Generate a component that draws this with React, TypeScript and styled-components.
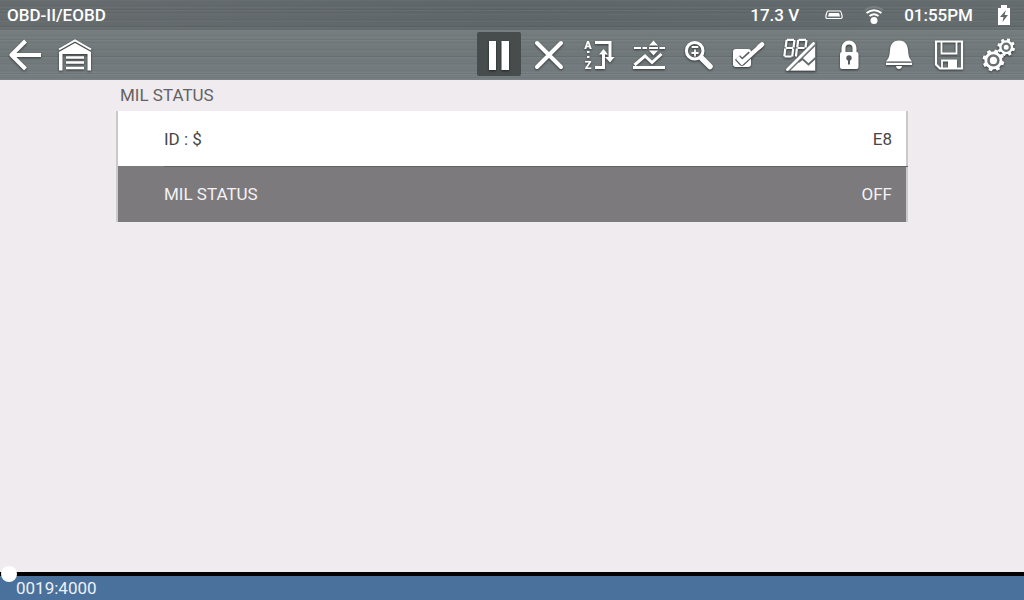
import React, { useState } from "react";
import styled, { createGlobalStyle } from "styled-components";

const GlobalStyle = createGlobalStyle`
  * { box-sizing: border-box; }
  body {
    margin: 0;
    background: #efebee;
    font-family: Roboto, "Liberation Sans", sans-serif;
    font-size: 17px;
    line-height: 20px;
  }
`;

const Screen = styled.div`
  display: flex;
  flex-direction: column;
  min-height: 100vh;
`;

const brushed = `
  repeating-linear-gradient(180deg, rgba(255,255,255,0.03) 0 1px, transparent 1px 5px, rgba(0,0,0,0.03) 5px 6px, transparent 6px 7px),
  repeating-linear-gradient(180deg, transparent 0 9px, rgba(0,0,0,0.05) 9px 10px, rgba(255,255,255,0.04) 10px 11px, transparent 11px 17px)`;

const StatusBar = styled.header`
  display: flex;
  align-items: center;
  height: 30px;
  padding: 0 14px 0 7px;
  color: #fff;
  font-weight: 500;
  background: ${brushed}, linear-gradient(90deg, #666c6e, #5f6669 50%, #656c6e);
`;

const Title = styled.h1`
  margin: 0;
  flex: 1;
  font-size: 17px;
  font-weight: 500;
`;

const StatusItems = styled.div`
  display: flex;
  align-items: center;
`;

const StatusIcon = styled.svg<{ $gap: number }>`
  display: block;
  margin-left: ${(p) => p.$gap}px;
`;

const Clock = styled.time`
  margin-left: 20px;
`;

const Toolbar = styled.nav`
  display: flex;
  align-items: center;
  gap: 6px;
  height: 50px;
  padding: 0 3px 2px;
  background: ${brushed}, linear-gradient(180deg, #767d7f, #6f7779 50%, #777e82);
`;

const Spacer = styled.div`
  flex: 1;
`;

const ToolButton = styled.button<{ $active?: boolean }>`
  width: 44px;
  height: 44px;
  padding: 0;
  border: 0;
  border-radius: 2px;
  color: #fff;
  background: ${(p) => (p.$active ? "#474c4c" : "transparent")};
  cursor: pointer;
`;

const Glyph = styled.svg`
  display: block;
  filter: drop-shadow(0 1px 1px rgba(0, 0, 0, 0.55));
`;

const Content = styled.main`
  flex: 1;
  width: 100%;
  max-width: 792px;
  margin: 0 auto;
`;

const Heading = styled.h2`
  margin: 0;
  padding: 5px 4px 6px;
  color: #646264;
  font-size: 17px;
  font-weight: 400;
`;

const Readings = styled.dl`
  margin: 0;
  border: solid #cbcacb;
  border-width: 0 2px;
`;

const Reading = styled.div<{ $selected?: boolean }>`
  position: relative;
  display: flex;
  align-items: center;
  justify-content: space-between;
  height: ${(p) => (p.$selected ? 56 : 55)}px;
  padding: 0 14px 0 46px;
  color: ${(p) => (p.$selected ? "#f4f2f4" : "#464646")};
  background: ${(p) => (p.$selected ? "#7d7a7d" : "#fff")};

  &:not(:first-child)::before {
    content: "";
    position: absolute;
    top: 0;
    left: 46px;
    right: -2px;
    height: 1px;
    background: #626262;
  }
`;

const Name = styled.dt``;

const Value = styled.dd`
  margin: 0;
`;

const Footer = styled.footer`
  height: 28px;
  background: #4a709c;
  color: #edf1f6;
`;

const Timeline = styled.input`
  appearance: none;
  display: block;
  position: relative;
  width: 100%;
  height: 4px;
  margin: 0;
  padding: 0 1px;
  background: #000;
  outline: none;

  &::-webkit-slider-thumb {
    appearance: none;
    width: 16px;
    height: 16px;
    border-radius: 50%;
    background: #fff;
  }
`;

const FrameCount = styled.output`
  display: block;
  padding: 2px 16px;
  font-size: 17px;
`;

type Point = [number, number];

function gearPath(cx: number, cy: number, outer: number, inner: number, teeth: number) {
  const step = (Math.PI * 2) / teeth;
  const points: Point[] = [];
  for (let i = 0; i < teeth; i++) {
    const a = i * step + 0.3;
    const corners: Point[] = [[-0.3, inner], [-0.2, outer], [0.2, outer], [0.3, inner]];
    corners.forEach(([t, r]) =>
      points.push([cx + r * Math.cos(a + t * step), cy + r * Math.sin(a + t * step)])
    );
  }
  return "M" + points.map(([x, y]) => `${x.toFixed(1)} ${y.toFixed(1)}`).join("L") + "Z";
}

const icons = {
  back: (
    <path d="M22.500 9L8.500 23L22.500 37M8.500 23H38" fill="none" stroke="currentColor" strokeWidth="4" strokeLinejoin="round" />
  ),
  home: (
    <>
      <path d="M6 17.500L22 8.500L38 17.500" fill="none" stroke="currentColor" strokeWidth="2" />
      <path d="M6 20L22 11L38 20V38.500H34.500V22H9.500V38.500H6Z" fill="currentColor" />
      <path d="M13 25.500H31M13 30.500H31M13 36H31" stroke="currentColor" strokeWidth="2.500" />
    </>
  ),
  pause: <path d="M12 9H19V38H12ZM24.500 9H32V38H24.500Z" fill="currentColor" />,
  close: (
    <path d="M10 11L34 35M34 11L10 35" stroke="currentColor" strokeWidth="4" strokeLinecap="round" />
  ),
  sort: (
    <>
      <g fill="currentColor" fontFamily="Roboto, sans-serif" fontSize="11" fontWeight="900" textAnchor="middle">
        <text x="11" y="17">A</text>
        <text x="11" y="37">Z</text>
      </g>
      <path d="M10 19h2.500v2h-2.500zM10 24h2.500v2h-2.500z" fill="currentColor" />
      <path d="M18 10.500H33V26M18 35.500H26.500V21" fill="none" stroke="currentColor" strokeWidth="3" />
      <path d="M28 25H37.500L33 30.500ZM22 22.500H31L26.500 17Z" fill="currentColor" />
    </>
  ),
  scale: (
    <>
      <path d="M7 16H14M15.500 16H20M22 16H31M32.500 16H38" stroke="currentColor" strokeWidth="2" />
      <path d="M26.500 8.500L31 13.500H22ZM26.500 23.500L31 18.500H22Z" fill="currentColor" />
      <path d="M7.500 33L18 24L25 30.500L34.500 22" fill="none" stroke="currentColor" strokeWidth="3" />
      <path d="M6 35.500H38" stroke="currentColor" strokeWidth="3" />
    </>
  ),
  zoom: (
    <>
      <circle cx="17.700" cy="18.700" r="8.300" fill="none" stroke="currentColor" strokeWidth="3" />
      <path d="M24.500 26L33 34.500" stroke="currentColor" strokeWidth="5.500" strokeLinecap="round" />
      <path d="M14.700 15H21.300M14.500 21H21.500M18 17.500V24.500" stroke="currentColor" strokeWidth="1.800" />
    </>
  ),
  select: (
    <>
      <rect x="6" y="17" width="18" height="18" rx="3" fill="currentColor" />
      <path d="M10.500 25.500L15 30.500L24 22" fill="none" stroke="#555d5f" strokeWidth="7" strokeLinejoin="round" />
      <path d="M10.500 25.500L15 30.500L34.500 13" fill="none" stroke="currentColor" strokeWidth="4.200" />
      <path d="M32 15L35 12.500" fill="none" stroke="currentColor" strokeWidth="4.500" strokeLinecap="round" />
    </>
  ),
  graph: (
    <>
      <path
        d="M9.800 7.800H17M9 16H16M7.600 24.500H14.500M9.600 8L8.600 15.500M8.300 16.500L7.300 24.500M17.500 8L16.500 15.500M16.200 16.500L15.200 24.500M21.500 7.800H29M20.500 16H27.500M21.200 8L20.200 15.500M19.900 16.500L18.900 24.500M29.500 8L28.500 15.500"
        fill="none" stroke="currentColor" strokeWidth="2.200"
      />
      <path d="M39 8V39H8Z" fill="#6f7779" />
      <path d="M38 14.500V38.500H13.500Z" fill="currentColor" />
      <path d="M21.500 30L25.500 27L31.500 32.500L38.500 26" fill="none" stroke="#626a6c" strokeWidth="1.800" />
      <path d="M10.500 37.500L36.500 11.500" stroke="currentColor" strokeWidth="2.800" strokeLinecap="round" />
    </>
  ),
  lock: (
    <>
      <path d="M16.500 22V16A5.500 5.500 0 0 1 27.500 16V22" fill="none" stroke="currentColor" strokeWidth="4" />
      <rect x="13" y="20" width="18.500" height="17" rx="2" fill="currentColor" />
      <circle cx="22" cy="26" r="2.700" fill="#555c5e" />
      <path d="M21 27H23V32.500H21Z" fill="#555c5e" />
    </>
  ),
  bell: (
    <>
      <path d="M9 29.500C12 26 12.500 24 13 18C13.500 11.500 17 8.500 22 8.500S30.500 11.500 31 18C31.500 24 32 26 35 29.500Z" fill="currentColor" />
      <path d="M9 30.800H35V33H9ZM19 34H25Q24.500 37 22 37T19 34Z" fill="currentColor" />
    </>
  ),
  save: (
    <g fill="none" stroke="currentColor" strokeWidth="2.200">
      <path d="M9 9.500H35V36.500H13L9 32.500Z" />
      <path d="M14.500 10V21.500H29.500V10M15 36V28.500H29V36" strokeWidth="1.800" />
      <path d="M21 28H30V37H21Z" fill="currentColor" stroke="none" />
    </g>
  ),
  settings: (
    <g fill="none" stroke="currentColor">
      <path d={gearPath(16.4, 28.4, 11, 9, 8)} fill="currentColor" stroke="none" />
      <circle cx="16.400" cy="28.400" r="4.900" stroke="#687072" strokeWidth="2.600" />
      <path d={gearPath(29.2, 15.2, 9, 7, 8)} fill="currentColor" stroke="none" />
      <circle cx="29.200" cy="15.200" r="3.600" stroke="#687072" strokeWidth="2.200" />
    </g>
  ),
};

type IconName = keyof typeof icons;

function Tool({ name, label, active }: { name: IconName; label: string; active?: boolean }) {
  return (
    <ToolButton type="button" aria-label={label} $active={active}>
      <Glyph width="44" height="44" viewBox="0 0 44 44" aria-hidden="true">
        {icons[name]}
      </Glyph>
    </ToolButton>
  );
}

const tools: { name: IconName; label: string; active?: boolean }[] = [
  { name: "pause", label: "Pause", active: true },
  { name: "close", label: "Clear" },
  { name: "sort", label: "Sort" },
  { name: "scale", label: "Scale" },
  { name: "zoom", label: "Zoom" },
  { name: "select", label: "Custom data list" },
  { name: "graph", label: "Change view" },
  { name: "lock", label: "Lock" },
  { name: "bell", label: "Alarm" },
  { name: "save", label: "Save" },
  { name: "settings", label: "Settings" },
];

const readings = [
  { name: "ID : $", value: "E8", selected: false },
  { name: "MIL STATUS", value: "OFF", selected: true },
];

export default function App() {
  const [frame, setFrame] = useState(0);

  return (
    <>
      <GlobalStyle />
      <Screen>
        <StatusBar>
          <Title>OBD-II/EOBD</Title>
          <StatusItems>
            <span>17.3 V</span>
            <StatusIcon $gap={25} width="20" height="12" viewBox="0 0 20 12" aria-hidden="true">
              <path d="M4 2H16Q17 2 18 6.500Q18.500 9.500 17 9.500H3Q1.500 9.500 2 6.500Q3 2 4 2Z" fill="none" stroke="#fff" strokeWidth="1.200" />
              <path d="M5 4H15L16 7.500H4Z" fill="#fff" />
            </StatusIcon>
            <StatusIcon $gap={20} width="20" height="20" viewBox="0 0 20 20" aria-hidden="true">
              <circle cx="10" cy="15.500" r="3.500" fill="#fff" />
              <path d="M5.500 11Q10 7.500 14.500 11M2.500 8Q10 2.500 17.500 8" fill="none" stroke="#fff" strokeWidth="1.900" />
              <path d="M1 5Q10 -1 19 5" fill="none" stroke="#7c7f80" strokeWidth="2" />
            </StatusIcon>
            <Clock>01:55PM</Clock>
            <StatusIcon $gap={25} width="12" height="20" viewBox="0 0 12 20" aria-hidden="true">
              <path d="M3 0H9V3H12V20H0V3H3Z" fill="#fff" />
              <path d="M8 5L2 12H5.500L4.500 17L10 10H6.500Z" fill="#60676a" />
            </StatusIcon>
          </StatusItems>
        </StatusBar>
        <Toolbar aria-label="Tools">
          <Tool name="back" label="Back" />
          <Tool name="home" label="Home" />
          <Spacer />
          {tools.map((tool) => (
            <Tool key={tool.name} {...tool} />
          ))}
        </Toolbar>
        <Content>
          <Heading>MIL STATUS</Heading>
          <Readings>
            {readings.map((r) => (
              <Reading key={r.name} $selected={r.selected}>
                <Name>{r.name}</Name>
                <Value>{r.value}</Value>
              </Reading>
            ))}
          </Readings>
        </Content>
        <Footer>
          <Timeline
            type="range"
            aria-label="Recorded frame"
            min={0}
            max={4000}
            value={frame}
            onChange={(e) => setFrame(Number(e.target.value))}
          />
          <FrameCount>0019:4000</FrameCount>
        </Footer>
      </Screen>
    </>
  );
}
